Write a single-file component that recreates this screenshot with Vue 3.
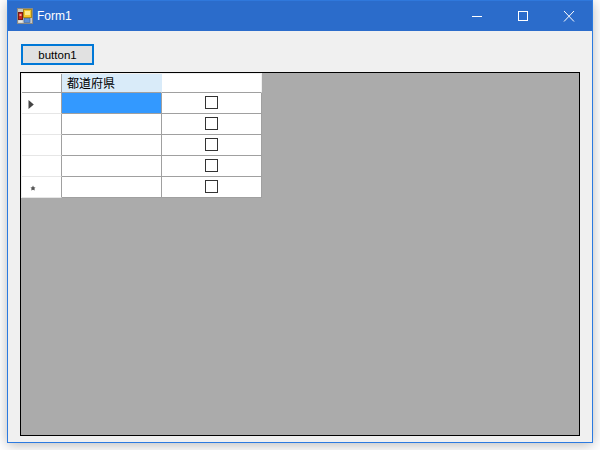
<script setup>
const rows = [
  { id: 1, marker: 'current', selected: true },
  { id: 2, marker: '', selected: false },
  { id: 3, marker: '', selected: false },
  { id: 4, marker: '', selected: false },
  { id: 5, marker: 'new', selected: false }
]
</script>

<template>
  <div class="desktop">
    <div class="window">
      <header class="titlebar">
        <svg class="app-icon" width="16" height="16" viewBox="0 0 16 16">
          <rect x="0.500" y="0.500" width="15" height="15" fill="#c9c9c4" stroke="#8a8a86" />
          <rect x="6.500" y="1.500" width="8" height="8" fill="#f4c62c" stroke="#a88a20" />
          <rect x="8" y="3" width="5" height="4" fill="#fbe98c" />
          <rect x="1.500" y="4.500" width="4" height="7" fill="#c8281c" stroke="#7a1a14" />
          <rect x="2.500" y="6" width="2" height="2" fill="#f3a29a" />
          <rect x="7" y="10.500" width="6" height="4" fill="#5a8fdc" stroke="#33609f" stroke-width="0.600" />
          <rect x="1.500" y="12.500" width="4" height="2" fill="#e8e8e4" />
        </svg>
        <span class="title">Form1</span>
        <div class="controls">
          <svg class="ctrl" width="46" height="31" viewBox="0 0 46 31">
            <path d="M18 15.500h10" stroke="#fff" fill="none" />
          </svg>
          <svg class="ctrl" width="46" height="31" viewBox="0 0 46 31">
            <rect x="18.500" y="10.500" width="9" height="9" stroke="#fff" fill="none" />
          </svg>
          <svg class="ctrl" width="46" height="31" viewBox="0 0 46 31">
            <path d="M18 10l10 10.500M28 10L18 20.500" stroke="#fff" fill="none" />
          </svg>
        </div>
      </header>
      <main class="client">
        <button class="btn" type="button">button1</button>
        <section class="grid-view">
          <div class="table">
            <div class="cell corner"></div>
            <div class="cell col-head active">都道府県</div>
            <div class="cell col-head"></div>
            <template v-for="row in rows" :key="row.id">
              <div class="cell row-head" :class="{ 'is-new': row.marker === 'new' }">
                <svg v-if="row.marker === 'current'" width="6" height="9" viewBox="0 0 6 9">
                  <path d="M0.500 0L5.800 4.500L0.500 9Z" fill="#444" />
                </svg>
                <svg v-else-if="row.marker === 'new'" width="6" height="6" viewBox="0 0 7 7">
                  <path d="M3.500 0.500L4.500 2.500L6.500 2.800L5.200 4.200L5.500 6.500L3.500 5.500L1.500 6.500L1.800 4.200L0.500 2.800L2.500 2.500Z" fill="#555" />
                </svg>
              </div>
              <div class="cell body" :class="{ selected: row.selected }"></div>
              <div class="cell body check-cell"><span class="check"></span></div>
            </template>
          </div>
        </section>
      </main>
    </div>
  </div>
</template>

<style scoped>
.desktop {
  width: 600px;
  height: 450px;
  background: #fff;
  overflow: hidden;
  padding: 0 7px;
  box-sizing: border-box;
  font-family: "Liberation Sans", "Noto Sans CJK JP", sans-serif;
}
.window {
  width: 586px;
  height: 443px;
  box-sizing: border-box;
  border: 1px solid #2b7ae0;
  border-top: 0;
  background: #f0f0f0;
  box-shadow: 0 2px 12px rgba(0, 0, 0, 0.28);
  display: flex;
  flex-direction: column;
}
.titlebar {
  height: 31px;
  flex: none;
  box-sizing: border-box;
  border-top: 1px solid #2f78dc;
  background: #2b6ccb;
  display: flex;
  align-items: center;
  padding-left: 9px;
  color: #fff;
}
.app-icon { flex: none; }
.title {
  margin-left: 4px;
  font: 12px "Liberation Sans", sans-serif;
}
.controls {
  margin-left: auto;
  display: flex;
}
.ctrl { display: block; }
.client {
  flex: 1;
  padding: 13px 12px 6px 12px;
  display: flex;
  flex-direction: column;
  min-height: 0;
}
.btn {
  width: 73px;
  height: 21px;
  margin-left: 1px;
  flex: none;
  box-sizing: border-box;
  border: 2px solid #0078d7;
  background: #e1e1e1;
  color: #000;
  padding: 0;
  font: 11.500px "Liberation Sans", sans-serif;
}
.grid-view {
  margin-top: 7px;
  flex: 1;
  min-height: 0;
  border: 1px solid #000;
  background: #ababab;
}
.table {
  display: grid;
  grid-template-columns: 40px 100px 100px;
  grid-template-rows: 19px repeat(5, 21px);
  width: 241px;
  box-sizing: border-box;
  border-left: 1px solid #f0f0f0;
  border-top: 1px solid #f0f0f0;
}
.cell { box-sizing: border-box; background: #fff; }
.corner {
  border-right: 1px solid #a0a0a0;
  border-bottom: 1px solid #a0a0a0;
}
.col-head {
  border-bottom: 1px solid #a0a0a0;
  border-right: 1px solid #f0f0f0;
  font: 12px "Noto Sans CJK JP", sans-serif;
  line-height: 17px;
  padding-left: 5px;
  color: #000;
}
.col-head.active { background: #d9ebf9; border-right-color: #d9ebf9; }
.row-head {
  border-right: 1px solid #a0a0a0;
  border-bottom: 1px solid #e6e6e6;
  display: flex;
  align-items: center;
  padding-left: 6px;
  padding-top: 2px;
}
.row-head.is-new { padding-left: 8px; }
.body {
  border-right: 1px solid #a0a0a0;
  border-bottom: 1px solid #a0a0a0;
}
.selected { background: #3399ff; }
.check-cell {
  display: flex;
  align-items: center;
  justify-content: center;
  padding-bottom: 2px;
}
.check {
  width: 13px;
  height: 13px;
  box-sizing: border-box;
  border: 1px solid #333;
  background: #fff;
}
</style>
